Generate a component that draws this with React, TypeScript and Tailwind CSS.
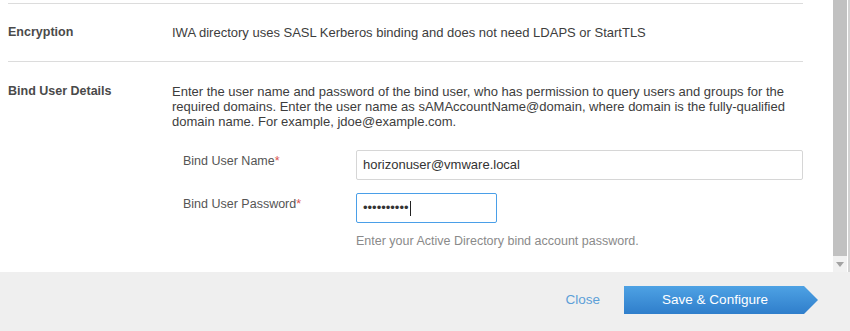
import React from 'react';

export default function App() {
    return (
        <div className="w-[850px] h-[331px] flex flex-col bg-white overflow-hidden font-['Liberation_Sans',Arial,sans-serif]">
            {/* Scrollable body */}
            <div className="flex h-[272px]">
                <div className="flex-1 bg-white px-2">
                    <div className="w-[795px] mt-[3px] border-t border-[#dcdcdc]">
                        {/* Encryption row */}
                        <div className="flex items-center h-[58px] border-b border-[#dcdcdc]">
                            <div className="w-[164px] text-[12.5px] font-bold text-[#4a4a4a]">Encryption</div>
                            <div className="text-[13px] text-[#3d3d3d]">
                                IWA directory uses SASL Kerberos binding and does not need LDAPS or StartTLS
                            </div>
                        </div>

                        {/* Bind user details */}
                        <div className="flex pt-[22px]">
                            <div className="w-[164px] shrink-0 text-[12.5px] leading-[15px] font-bold text-[#4a4a4a]">Bind User Details</div>
                            <div className="flex-1">
                                <p className="text-[13px] leading-[15px] text-[#3d3d3d]">
                                    Enter the user name and password of the bind user, who has permission to query users and groups for the required domains. Enter the user name as sAMAccountName@domain, where domain is the fully-qualified domain name. For example, jdoe@example.com.
                                </p>

                                <div className="mt-[21px] pl-[11px] flex flex-col gap-[13px]">
                                    <div className="flex">
                                        <label className="w-[173px] pt-[2px] text-[12.5px] text-[#555]">
                                            Bind User Name<span className="text-[#d9534f]">*</span>
                                        </label>
                                        <div className="w-[447px] h-[30px] border border-[#d6d6d6] rounded-[2px] flex items-center px-[6px] text-[13px] text-[#333]">
                                            horizonuser@vmware.local
                                        </div>
                                    </div>
                                    <div className="flex">
                                        <label className="w-[173px] pt-[2px] text-[12.5px] text-[#555]">
                                            Bind User Password<span className="text-[#d9534f]">*</span>
                                        </label>
                                        <div>
                                            <div className="w-[141px] h-[30px] border border-[#4a9fe8] rounded-[2px] flex items-center px-[6px] text-[13px] text-[#333]">
                                                ••••••••••
                                                <span className="ml-[1px] w-px h-[15px] bg-[#222]"></span>
                                            </div>
                                            <p className="mt-[9px] text-[12.5px] text-[#8a8a8a]">Enter your Active Directory bind account password.</p>
                                        </div>
                                    </div>
                                </div>
                            </div>
                        </div>
                    </div>
                </div>

                {/* Scrollbar */}
                <div className="w-[14px] bg-[#f1f1f1] flex flex-col">
                    <div className="h-[256px] bg-[#c1c1c1]"></div>
                    <div className="flex-1 flex items-center justify-center">
                        <svg width="8" height="5" viewBox="0 0 8 5">
                            <path d="M0 0 L8 0 L4 5 Z" fill="#a3a3a3" />
                        </svg>
                    </div>
                </div>
                <div className="w-px bg-white"></div>
                <div className="w-[2px] bg-[#d3d3d3]"></div>
            </div>

            {/* Footer */}
            <div className="flex-1 bg-[#efefef] flex items-center justify-end pr-[32px] pb-[3px]">
                <button className="text-[13.5px] text-[#5d9fd8] mr-[24px]">Close</button>
                <button
                    className="w-[194px] h-[28px] pr-[12px] text-white text-[13.5px] bg-gradient-to-b from-[#4ea2e4] to-[#2f7ecb]"
                    style={{ clipPath: 'polygon(0 0, calc(100% - 14px) 0, 100% 50%, calc(100% - 14px) 100%, 0 100%)' }}
                >
                    Save &amp; Configure
                </button>
            </div>
        </div>
    );
}
